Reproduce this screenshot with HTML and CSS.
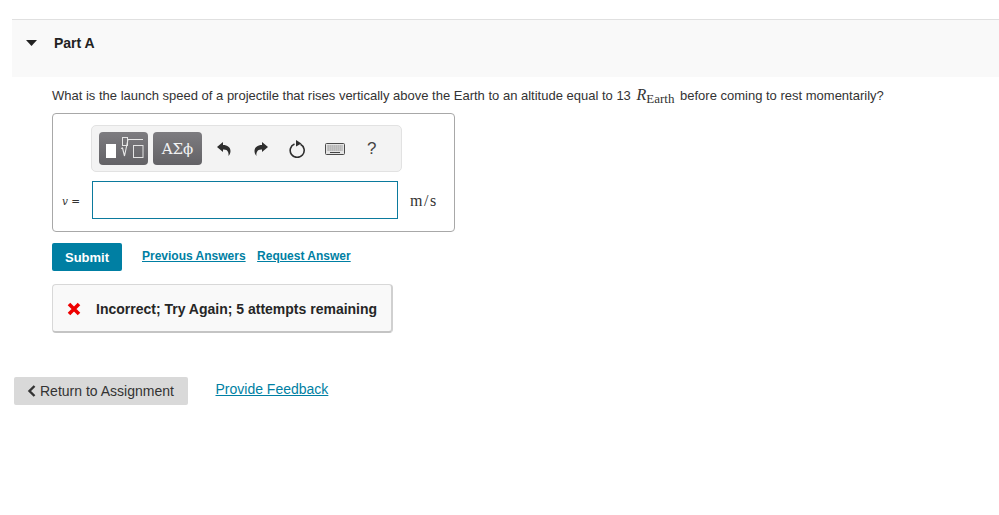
FILE: index.html
```html
<!DOCTYPE html>
<html lang="en">
<head>
<meta charset="utf-8">
<title>Part A</title>
<link rel="stylesheet" href="styles.css">
</head>
<body>
<main class="page">
  <header class="part-head">
    <svg class="caret" width="11" height="6" viewBox="0 0 11 6"><path d="M0 0h11L5.500 6z" fill="#222"/></svg>
    <h2 class="part-title">Part A</h2>
  </header>
  <section class="part-body">
    <p class="question">What is the launch speed of a projectile that rises vertically above the Earth to an altitude equal to 13 <span class="math"><i>R</i><sub>Earth</sub></span> before coming to rest momentarily?</p>
    <div class="answer-box">
      <div class="toolbar-row">
        <div class="toolbar">
          <button class="tool-btn templates" type="button" aria-label="Templates">
            <svg width="49" height="33" viewBox="0 0 49 33">
              <rect x="7" y="12" width="10" height="14" fill="#fff"/>
              <rect x="23.500" y="5.500" width="5" height="8" fill="none" stroke="#e4e4e4"/>
              <path d="M22 16.500l1.500-.5 2 8L29 7.500h15" fill="none" stroke="#e8e8e8" stroke-width="1.100"/>
              <rect x="34.500" y="13.500" width="9.500" height="12" fill="none" stroke="#e4e4e4"/>
            </svg>
          </button>
          <button class="tool-btn symbols" type="button">ΑΣϕ</button>
          <div class="tool-icons">
            <svg class="ic" width="16" height="16" viewBox="0 0 16 16"><path d="M1 6 7 1V4C11.500 4 14.500 6.500 14.500 10 14.500 12 13.500 14 12.500 15 13 12 12 8 7 8.500V11z" fill="#2e2e2e"/></svg>
            <svg class="ic" width="16" height="16" viewBox="0 0 16 16"><path d="M15 6 9 1V4C4.500 4 1.500 6.500 1.500 10 1.500 12 2.500 14 3.500 15 3 12 4 8 9 8.500V11z" fill="#2e2e2e"/></svg>
            <svg class="ic refresh" width="17" height="19" viewBox="0 0 17 19"><path d="M5.500 4.900A7 7 0 1 0 11.500 5.200" fill="none" stroke="#2e2e2e" stroke-width="1.600"/><path d="M7 1 12.500 4.600 7 7.500z" fill="#2e2e2e"/></svg>
            <svg class="ic keys" width="20" height="12" viewBox="0 0 20 12"><rect x=".5" y=".5" width="19" height="11" rx="1" fill="#e4e4e4" stroke="#4a4a4a"/><path d="M2.500 3h15M2.500 5h15M2.500 7h15" stroke="#666" stroke-dasharray="1.200 .8"/><path d="M5 9.500h10" stroke="#444"/></svg>
            <span class="help">?</span>
          </div>
        </div>
      </div>
      <div class="input-row">
        <span class="var-label"><i>v</i> =</span>
        <input class="answer-input" type="text" aria-label="v">
        <span class="unit">m/s</span>
      </div>
    </div>
    <div class="actions">
      <button class="submit" type="button">Submit</button>
      <a class="action-link" href="#">Previous Answers</a>
      <a class="action-link" href="#">Request Answer</a>
    </div>
    <div class="feedback">
      <svg width="14" height="14" viewBox="0 0 14 14"><path d="M2 2 12 12M12 2 2 12" stroke="#ee0000" stroke-width="3.600"/></svg>
      <span>Incorrect; Try Again; 5 attempts remaining</span>
    </div>
  </section>
  <footer class="page-foot">
    <button class="return" type="button">
      <svg width="9" height="12" viewBox="0 0 9 12"><path d="M7.500 1 2.500 6l5 5" fill="none" stroke="#333" stroke-width="2.400"/></svg>
      Return to Assignment
    </button>
    <a class="feedback-link" href="#">Provide Feedback</a>
  </footer>
</main>
</body>
</html>
```
FILE: styles.css
```css
* { box-sizing: border-box; }
html, body { margin: 0; background: #fff; }
body {
  font-family: "Liberation Sans", Arial, sans-serif;
  color: #333;
  width: 999px;
  height: 515px;
  overflow: hidden;
}
.page { padding: 19px 0 0 12px; }
.part-head {
  height: 58px;
  background: #f9f9f9;
  border-top: 1px solid #e0e0e0;
  display: flex;
  align-items: flex-start;
  padding: 20px 0 0 14px;
}
.caret { flex: none; }
.part-title {
  margin: -5px 0 0 17px;
  font-size: 14px;
  line-height: 16px;
  font-weight: 700;
  color: #222;
}
.part-body { padding: 0 0 0 40px; }
.question {
  margin: 9px 0 0;
  font-size: 13px;
  line-height: 17px;
  height: 27px;
  color: #333;
  white-space: nowrap;
}
.math { font-family: "Liberation Serif", serif; font-size: 16px; margin: 0 2px; }
.math sub { font-size: 13px; line-height: 0; vertical-align: -3px; }
.answer-box {
  width: 403px;
  height: 119px;
  border: 1px solid #a8a8a8;
  border-radius: 4px;
  padding: 11px 0 0 38px;
}
.toolbar {
  width: 311px;
  height: 47px;
  background: #f3f3f3;
  border: 1px solid #e2e2e2;
  border-radius: 5px;
  display: flex;
  align-items: flex-start;
  padding: 6px 0 0 7px;
  gap: 5px;
}
.tool-btn {
  height: 33px;
  border: 0;
  border-radius: 4px;
  background: linear-gradient(#7d7c80, #636266);
  color: #f2f2f2;
  padding: 0;
  display: flex;
  align-items: center;
  justify-content: center;
}
.templates { width: 49px; }
.symbols {
  width: 49px;
  font-family: "DejaVu Serif", "Liberation Serif", serif;
  font-size: 15px;
}
.tool-icons {
  display: flex;
  align-items: center;
  height: 33px;
  margin-left: 9px;
}
.ic { flex: none; }
.ic:nth-child(1) { margin-right: 21px; }
.ic:nth-child(2) { margin-right: 20px; }
.ic:nth-child(3) { margin-right: 19px; }
.ic:nth-child(4) { margin-right: 22px; }
.help { font-size: 17px; color: #444; font-family: "Liberation Sans", sans-serif; }
.input-row {
  display: flex;
  align-items: center;
  margin: 9px 0 0 -38px;
}
.var-label {
  width: 39px;
  padding: 2px 0 0 9px;
  font-family: "DejaVu Serif", "Liberation Serif", serif;
  font-size: 10.500px;
  color: #333;
  white-space: nowrap;
}
.answer-input {
  width: 306px;
  height: 38px;
  border: 1px solid #0b7a9d;
  background: #fff;
  padding: 0;
  outline: 0;
}
.unit {
  margin-left: 12px;
  padding-top: 2px;
  font-family: "Liberation Serif", serif;
  font-size: 16px;
  letter-spacing: 1.500px;
  color: #333;
}
.actions {
  margin-top: 11px;
  display: flex;
  align-items: flex-start;
  height: 28px;
}
.submit {
  width: 70px;
  height: 28px;
  border: 0;
  border-radius: 2px;
  background: #007fa3;
  color: #fff;
  font: 700 13px "Liberation Sans", Arial, sans-serif;
  padding: 0;
  margin-right: 20px;
}
.action-link {
  font-size: 12px;
  font-weight: 700;
  line-height: 26px;
  color: #007fa3;
  margin-right: 11.500px;
}
.feedback {
  margin-top: 13px;
  width: 341px;
  height: 49px;
  display: flex;
  align-items: center;
  gap: 15px;
  padding: 2px 0 0 14px;
  background: #f9f9f9;
  border: 1px solid #d8d8d8;
  border-bottom: 2px solid #c4c4c4;
  border-right: 2px solid #d0d0d0;
  border-radius: 4px;
  font-size: 14px;
  font-weight: 700;
  color: #262626;
  white-space: nowrap;
}
.feedback svg { flex: none; }
.page-foot {
  margin: 44px 0 0 2px;
  display: flex;
  align-items: flex-start;
}
.return {
  width: 174px;
  height: 28px;
  border: 0;
  border-radius: 2px;
  background: #d9d9d9;
  color: #333;
  font: 14px "Liberation Sans", Arial, sans-serif;
  padding: 0 0 0 13px;
  display: flex;
  align-items: center;
  gap: 4px;
}
.feedback-link {
  margin-left: 27.500px;
  font-size: 14px;
  line-height: 24px;
  color: #007fa3;
}
```
